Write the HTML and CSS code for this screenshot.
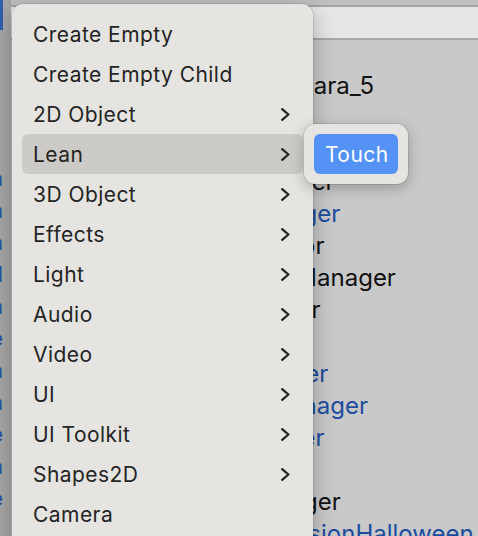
FILE: index.html
```html
<!DOCTYPE html>
<html lang="en">
<head>
  <meta charset="UTF-8" />
  <meta name="viewport" content="width=device-width, initial-scale=1.0"/>
  <title>Hierarchy</title>
  <link rel="stylesheet" href="styles.css">
</head>
<body>
  <div class="window">
    <div class="sidebar">
      <div class="sidebar-tab"></div>
      <div class="sidebar-list">
        <div class="sidebar-row">Data</div>
        <div class="sidebar-row">Area</div>
        <div class="sidebar-row">Data</div>
        <div class="sidebar-row">Label</div>
        <div class="sidebar-row">Data</div>
        <div class="sidebar-row">Scene</div>
        <div class="sidebar-row">Area</div>
        <div class="sidebar-row">Data</div>
        <div class="sidebar-row">Node</div>
        <div class="sidebar-row">Data</div>
        <div class="sidebar-row">Scene</div>
      </div>
    </div>

    <div class="hierarchy">
      <div class="toolbar"></div>
      <div class="tree">
        <div class="node" style="--depth:23">Chara_5</div>
        <div class="node" style="--depth:14">Canvas</div>
        <div class="node" style="--depth:14">EventSystem</div>
        <div class="node" style="--depth:19">Spawner</div>
        <div class="node link" style="--depth:14">AudioManager</div>
        <div class="node" style="--depth:19">Director</div>
        <div class="node" style="--depth:18">ButtonManager</div>
        <div class="node" style="--depth:17">Container</div>
        <div class="node" style="--depth:14">Systems</div>
        <div class="node link" style="--depth:21">Player</div>
        <div class="node link" style="--depth:17">InputManager</div>
        <div class="node link" style="--depth:21">Water</div>
        <div class="node" style="--depth:14">Stage</div>
        <div class="node" style="--depth:14">ScoreManager</div>
        <div class="node link" style="--depth:22">VersionHalloween</div>
      </div>
    </div>
  </div>

  <!-- GameObject context menu -->
  <div class="menu">
    <div class="item">Create Empty</div>
    <div class="item">Create Empty Child</div>
    <div class="item has-sub">2D Object
      <svg class="chev" viewBox="0 0 9 13"><polyline points="1.2,1.2 7.4,6.5 1.2,11.8"/></svg>
    </div>
    <div class="item has-sub open">Lean
      <svg class="chev" viewBox="0 0 9 13"><polyline points="1.2,1.2 7.4,6.5 1.2,11.8"/></svg>
    </div>
    <div class="item has-sub">3D Object
      <svg class="chev" viewBox="0 0 9 13"><polyline points="1.2,1.2 7.4,6.5 1.2,11.8"/></svg>
    </div>
    <div class="item has-sub">Effects
      <svg class="chev" viewBox="0 0 9 13"><polyline points="1.2,1.2 7.4,6.5 1.2,11.8"/></svg>
    </div>
    <div class="item has-sub">Light
      <svg class="chev" viewBox="0 0 9 13"><polyline points="1.2,1.2 7.4,6.5 1.2,11.8"/></svg>
    </div>
    <div class="item has-sub">Audio
      <svg class="chev" viewBox="0 0 9 13"><polyline points="1.2,1.2 7.4,6.5 1.2,11.8"/></svg>
    </div>
    <div class="item has-sub">Video
      <svg class="chev" viewBox="0 0 9 13"><polyline points="1.2,1.2 7.4,6.5 1.2,11.8"/></svg>
    </div>
    <div class="item has-sub">UI
      <svg class="chev" viewBox="0 0 9 13"><polyline points="1.2,1.2 7.4,6.5 1.2,11.8"/></svg>
    </div>
    <div class="item has-sub">UI Toolkit
      <svg class="chev" viewBox="0 0 9 13"><polyline points="1.2,1.2 7.4,6.5 1.2,11.8"/></svg>
    </div>
    <div class="item has-sub">Shapes2D
      <svg class="chev" viewBox="0 0 9 13"><polyline points="1.2,1.2 7.4,6.5 1.2,11.8"/></svg>
    </div>
    <div class="item">Camera</div>
    <div class="item">Visual Scripting</div>
  </div>

  <div class="menu submenu">
    <div class="item selected">Touch</div>
  </div>
</body>
</html>
```

FILE: styles.css
```css
body {
  margin: 0;
  width: 478px;
  height: 536px;
  overflow: hidden;
  font-family: Inter, "Noto Sans", sans-serif;
  background-color: #c9c9c9;
  position: relative;
}
.window {
  display: flex;
  height: 100%;
}
.sidebar {
  flex-shrink: 0;
  width: 11px;
  background-color: #a7a7a7;
  overflow: hidden;
}
.sidebar-tab {
  width: 3px;
  height: 30px;
  background-color: #2f5fae;
}
.sidebar-list {
  padding-top: 132px;
}
.sidebar-row {
  height: 32px;
  line-height: 32px;
  font-size: 22px;
  color: #2553a6;
  text-align: right;
  white-space: nowrap;
  direction: rtl;
  width: 3px;
}
.hierarchy {
  flex: 1;
  display: flex;
  flex-direction: column;
}
.toolbar {
  flex-shrink: 0;
  height: 33px;
  background-color: #e6e6e6;
  border-top: 5px solid #bfbfbf;
  border-bottom: 2px solid #a7a7a7;
  box-shadow: inset 0 2px 0 #a3a3a3;
}
.tree {
  padding-top: 30px;
}
.node {
  height: 32px;
  line-height: 32px;
  font-size: 24px;
  color: #111;
  white-space: nowrap;
  padding-left: calc(var(--depth) * 12px - 5px);
}
.node.link {
  color: #1d4c9f;
}

/* popup menus */
.menu {
  position: absolute;
  top: 4px;
  left: 12px;
  width: 301px;
  padding: 10px 0;
  background-color: #e6e4e0;
  border-radius: 11px;
  box-shadow: 0 0 0 0.5px rgba(0,0,0,0.18), 0 6px 22px rgba(0,0,0,0.28);
}
.item {
  display: flex;
  align-items: center;
  justify-content: space-between;
  height: 40px;
  margin: 0 10px;
  padding: 0 13px 0 11px;
  border-radius: 6px;
  font-size: 21px;
  letter-spacing: 0.45px;
  color: #242424;
}
.item.open {
  background-color: #cdcbc7;
}
.chev {
  width: 9px;
  height: 13px;
  fill: none;
  stroke: #262626;
  stroke-width: 2.3;
  stroke-linecap: round;
  stroke-linejoin: round;
}
.submenu {
  top: 124px;
  left: 304px;
  width: 104px;
  box-shadow: 0 0 0 0.5px rgba(0,0,0,0.18), 0 4px 14px rgba(0,0,0,0.25);
}
.item.selected {
  background-color: #5492f5;
  color: #fff;
  border-radius: 6px;
}
```
